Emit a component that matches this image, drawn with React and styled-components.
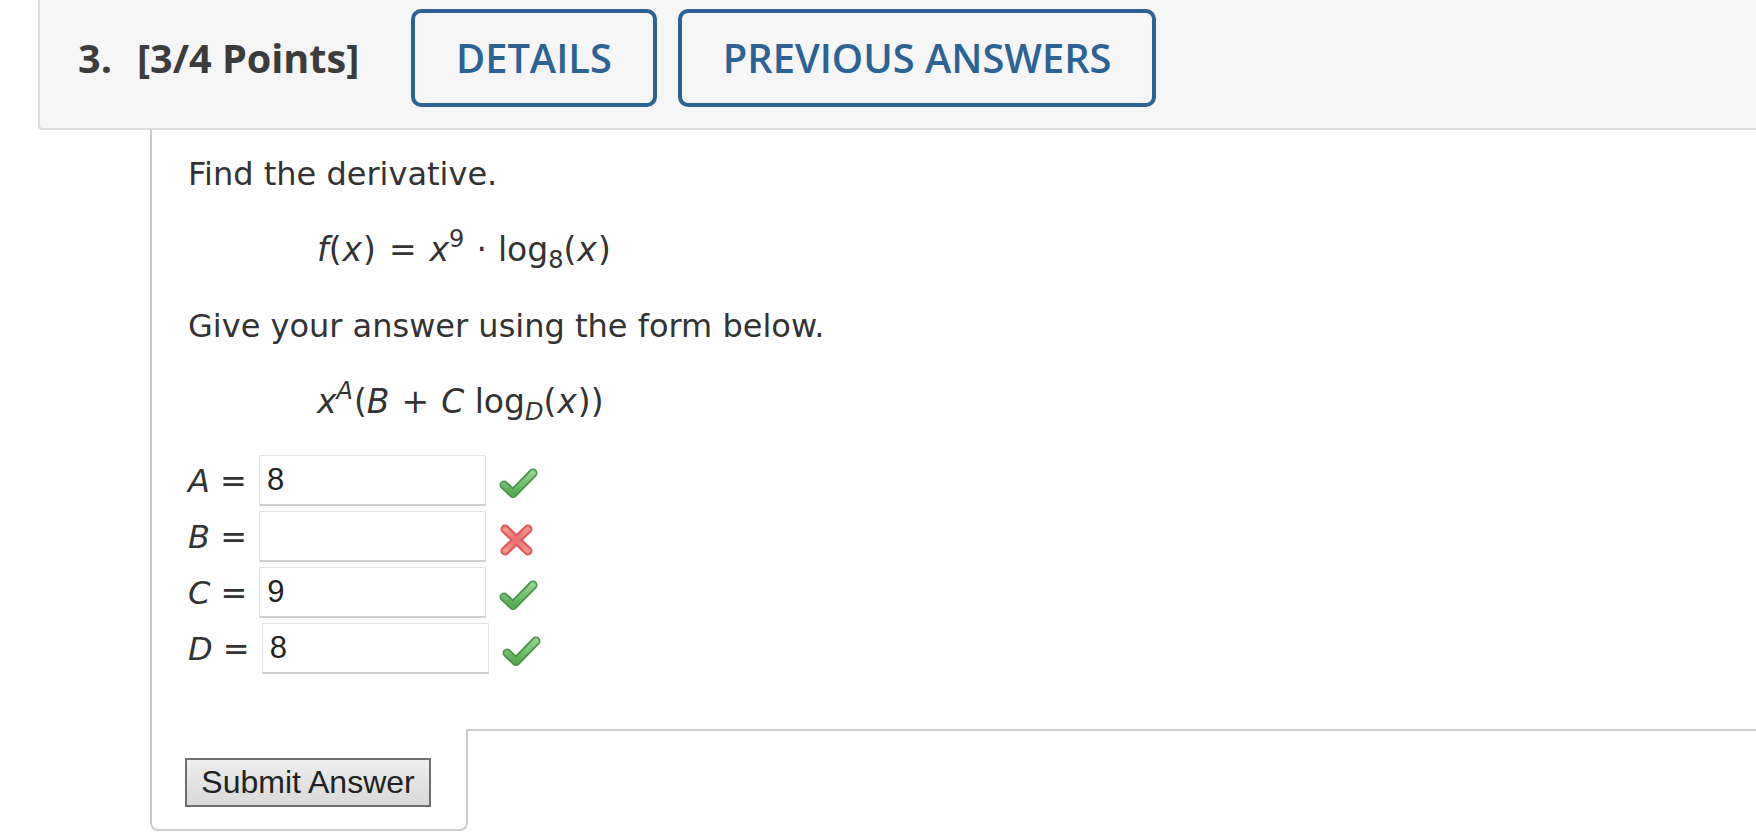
import React from "react";
import styled, { createGlobalStyle } from "styled-components";

const GlobalStyle = createGlobalStyle`
  html, body { margin: 0; padding: 0; background: #ffffff; }
  body { overflow: hidden; }
  * { box-sizing: border-box; }
`;

const Page = styled.div`
  width: 1756px;
  height: 834px;
  padding-left: 38px;
  overflow: hidden;
`;

const Header = styled.div`
  display: flex;
  align-items: center;
  gap: 21px;
  height: 130px;
  padding: 9px 0 21px 38px;
  background: #f6f6f6;
  border-left: 2px solid #dddddd;
  border-bottom: 2px solid #dddddd;
  border-bottom-left-radius: 4px;
`;

const Title = styled.div`
  flex: none;
  width: 312px;
  font-family: "Open Sans", sans-serif;
  font-weight: 700;
  font-size: 39.6px;
  line-height: 98px;
  color: #3c3c3c;
  white-space: nowrap;
`;

const Points = styled.span`
  margin-left: 25px;
`;

const HeadButton = styled.div`
  flex: none;
  display: flex;
  align-items: center;
  height: 98px;
  padding: 0 41px 2px;
  border: 4px solid #2c6396;
  border-radius: 10px;
  font-family: "Open Sans", sans-serif;
  font-weight: 600;
  font-size: 39.8px;
  color: #2c6396;
  white-space: nowrap;
`;

const Question = styled.div`
  margin-left: 112px;
`;

const Body = styled.div`
  border-left: 2px solid #cccccc;
  padding: 22px 0 55px 36px;
  font-family: "DejaVu Sans", Verdana, sans-serif;
  font-size: 32px;
  color: #333333;
`;

const Para = styled.p`
  margin: 0 0 ${(p) => p.$mb ?? 32}px;
  line-height: 44px;
  white-space: nowrap;
`;

const MathLine = styled(Para)`
  padding-left: 129px;
  font-size: 33px;
`;

const Var = styled.i`
  font-style: italic;
  padding: 0 ${(p) => p.$pad ?? 0}px;
`;

const Op = styled.span`
  margin: 0 ${(p) => p.$space ?? 10}px;
`;

const Sup = styled.span`
  font-size: 24px;
  line-height: 0;
  vertical-align: 14px;
  margin-right: 1px;
  font-style: ${(p) => (p.$italic ? "italic" : "normal")};
`;

const Sub = styled.span`
  font-size: 24px;
  line-height: 0;
  vertical-align: -7px;
  font-style: ${(p) => (p.$italic ? "italic" : "normal")};
`;

const Rows = styled.div`
  display: flex;
  flex-direction: column;
  gap: 5px;
`;

const Row = styled.div`
  display: flex;
  align-items: center;
  height: 51px;
`;

const Label = styled.span`
  margin-right: 12px;
  white-space: nowrap;
`;

const AnswerInput = styled.input`
  width: 227px;
  height: 51px;
  padding: 0 0 0 7px;
  border: 1px solid #e3e3e3;
  border-bottom: 2px solid #cfcfcf;
  background: #ffffff;
  font-family: "Liberation Sans", Arial, sans-serif;
  font-size: 31px;
  color: #222222;
  outline: none;
`;

const Mark = styled.span`
  display: inline-flex;
  margin-left: 13px;
  margin-top: 6px;
`;

const Footer = styled.div`
  display: flex;
  height: 102px;
`;

const SubmitArea = styled.div`
  flex: none;
  width: 318px;
  padding: 29px 0 0 33px;
  border-left: 2px solid #cccccc;
  border-right: 2px solid #cccccc;
  border-bottom: 2px solid #cccccc;
  border-radius: 0 0 8px 8px;
`;

const Filler = styled.div`
  flex: 1;
  border-top: 2px solid #cccccc;
`;

const SubmitButton = styled.button`
  width: 246px;
  height: 49px;
  padding: 0 0 1px;
  border: 2px solid #6f6f6f;
  border-radius: 0;
  background: linear-gradient(#eeeeee, #d9d9d9);
  font-family: "Liberation Sans", Arial, sans-serif;
  font-size: 32px;
  color: #222222;
  cursor: pointer;
`;

const CheckIcon = () => (
  <svg width="40" height="32" viewBox="0 0 40 32">
    <defs>
      <linearGradient id="chk" x1="0" y1="0" x2="0" y2="1">
        <stop offset="0" stopColor="#93d48f" />
        <stop offset="1" stopColor="#56ab51" />
      </linearGradient>
    </defs>
    <path d="M5 17 L14 25.5 L34 5" fill="none" stroke="#4a9445" strokeWidth="9" strokeLinecap="round" strokeLinejoin="round" />
    <path d="M5 17 L14 25.5 L34 5" fill="none" stroke="url(#chk)" strokeWidth="5.5" strokeLinecap="round" strokeLinejoin="round" />
  </svg>
);

const CrossIcon = () => (
  <svg width="36" height="32" viewBox="0 0 36 32">
    <defs>
      <radialGradient id="crs" cx="0.5" cy="0.5" r="0.6">
        <stop offset="0" stopColor="#e96c6b" />
        <stop offset="1" stopColor="#f29190" />
      </radialGradient>
    </defs>
    <path d="M6 5 L29 27 M29 5 L6 27" fill="none" stroke="#de5553" strokeWidth="9" strokeLinecap="round" />
    <path d="M6 5 L29 27 M29 5 L6 27" fill="none" stroke="url(#crs)" strokeWidth="5" strokeLinecap="round" />
  </svg>
);

const answers = [
  { name: "A", value: "8", ok: true },
  { name: "B", value: "", ok: false },
  { name: "C", value: "9", ok: true },
  { name: "D", value: "8", ok: true },
];

export default function App() {
  return (
    <>
      <GlobalStyle />
      <Page>
        <Header>
          <Title>
            3.<Points>[3/4 Points]</Points>
          </Title>
          <HeadButton>DETAILS</HeadButton>
          <HeadButton>PREVIOUS ANSWERS</HeadButton>
        </Header>
        <Question>
          <Body>
            <Para>Find the derivative.</Para>
            <MathLine>
              <Var>f</Var>(<Var $pad={1}>x</Var>)<Op $space={13}>=</Op>
              <Var>x</Var>
              <Sup>9</Sup>
              <Op $space={11}>·</Op>log<Sub>8</Sub>(<Var $pad={1}>x</Var>)
            </MathLine>
            <Para>Give your answer using the form below.</Para>
            <MathLine $mb={31}>
              <Var>x</Var>
              <Sup $italic>A</Sup>(<Var>B</Var>
              <Op $space={12}>+</Op>
              <Var>C</Var> log<Sub $italic>D</Sub>(<Var $pad={1}>x</Var>))
            </MathLine>
            <Rows>
              {answers.map((a) => (
                <Row key={a.name}>
                  <Label>
                    <Var>{a.name}</Var> =
                  </Label>
                  <AnswerInput readOnly defaultValue={a.value} />
                  <Mark>{a.ok ? <CheckIcon /> : <CrossIcon />}</Mark>
                </Row>
              ))}
            </Rows>
          </Body>
          <Footer>
            <SubmitArea>
              <SubmitButton>Submit Answer</SubmitButton>
            </SubmitArea>
            <Filler />
          </Footer>
        </Question>
      </Page>
    </>
  );
}
